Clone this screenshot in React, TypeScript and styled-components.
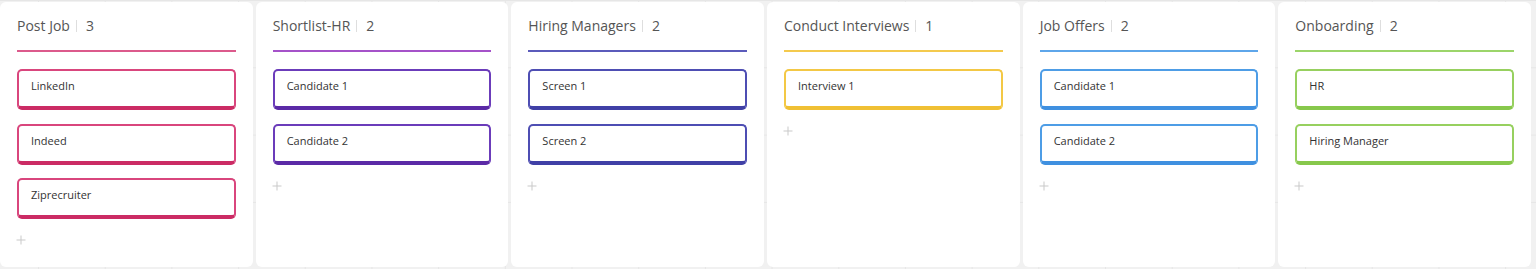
import React from "react";
import styled, { createGlobalStyle } from "styled-components";

const GlobalStyle = createGlobalStyle`
  html, body {
    margin: 0;
    padding: 0;
  }
  body {
    font-family: "Open Sans", "Liberation Sans", sans-serif;
    background-color: #f1f1f1;
    background-image:
      linear-gradient(to right, #e6e6e6 1px, transparent 1px),
      linear-gradient(to bottom, #e6e6e6 1px, transparent 1px);
    background-size: 66.7px 67.3px;
    background-position: 38px 0, 0 0;
  }
`;

const Board = styled.div`
  display: flex;
  gap: 3px;
  padding: 2px 5px 2px 0;
  height: 269px;
  box-sizing: border-box;
`;

const Column = styled.section`
  flex: 1;
  min-width: 0;
  background: #ffffff;
  border-radius: 6px;
  padding: 0 17px;
  box-sizing: border-box;
  display: flex;
  flex-direction: column;
`;

interface AccentProps {
  $line: string;
}

const Header = styled.header<AccentProps>`
  display: flex;
  align-items: center;
  padding: 14px 0 14px;
  line-height: 20px;
  font-size: 14px;
  color: #555555;
  border-bottom: 2px solid ${(p) => p.$line};
`;

const Divider = styled.span`
  display: inline-block;
  width: 1px;
  height: 12px;
  background: #dedede;
  margin: 0 9px 0 6px;
`;

const CardList = styled.div`
  display: flex;
  flex-direction: column;
  gap: 13.5px;
  margin-top: 17px;
`;

interface CardProps {
  $border: string;
  $bottom: string;
}

const Card = styled.div<CardProps>`
  height: 41px;
  box-sizing: border-box;
  border: 2px solid ${(p) => p.$border};
  border-bottom: 4px solid ${(p) => p.$bottom};
  border-radius: 5px;
  padding: 7px 12px 0;
  font-size: 11px;
  line-height: 16px;
  color: #333333;
`;

const AddButton = styled.div`
  margin-top: 16px;
  margin-left: -1px;
  width: 10px;
  height: 10px;
  color: #c9c9c9;
  display: flex;
`;

interface Stage {
  title: string;
  line: string;
  border: string;
  bottom: string;
  cards: string[];
}

const stages: Stage[] = [
  {
    title: "Post Job",
    line: "#dc5a8c",
    border: "#d9467d",
    bottom: "#cb2b64",
    cards: ["LinkedIn", "Indeed", "Ziprecruiter"],
  },
  {
    title: "Shortlist-HR",
    line: "#a552c9",
    border: "#6b3cba",
    bottom: "#5b2aa6",
    cards: ["Candidate 1", "Candidate 2"],
  },
  {
    title: "Hiring Managers",
    line: "#5b5bbb",
    border: "#4e4eb3",
    bottom: "#4040a6",
    cards: ["Screen 1", "Screen 2"],
  },
  {
    title: "Conduct Interviews",
    line: "#f4ca4e",
    border: "#f3c845",
    bottom: "#f0c034",
    cards: ["Interview 1"],
  },
  {
    title: "Job Offers",
    line: "#5ea6ea",
    border: "#4e9de6",
    bottom: "#3f90e0",
    cards: ["Candidate 1", "Candidate 2"],
  },
  {
    title: "Onboarding",
    line: "#9cd56a",
    border: "#97d05f",
    bottom: "#87c84c",
    cards: ["HR", "Hiring Manager"],
  },
];

const PlusIcon = () => (
  <svg width="10" height="10" viewBox="0 0 10 10">
    <path d="M5 0.5v9M0.5 5h9" stroke="currentColor" strokeWidth="1" fill="none" />
  </svg>
);

const App: React.FC = () => {
  return (
    <>
      <GlobalStyle />
      <Board>
        {stages.map((s) => (
          <Column key={s.title}>
            <Header $line={s.line}>
              {s.title}
              <Divider />
              {s.cards.length}
            </Header>
            <CardList>
              {s.cards.map((c) => (
                <Card key={c} $border={s.border} $bottom={s.bottom}>
                  {c}
                </Card>
              ))}
            </CardList>
            <AddButton>
              <PlusIcon />
            </AddButton>
          </Column>
        ))}
      </Board>
    </>
  );
};

export default App;
